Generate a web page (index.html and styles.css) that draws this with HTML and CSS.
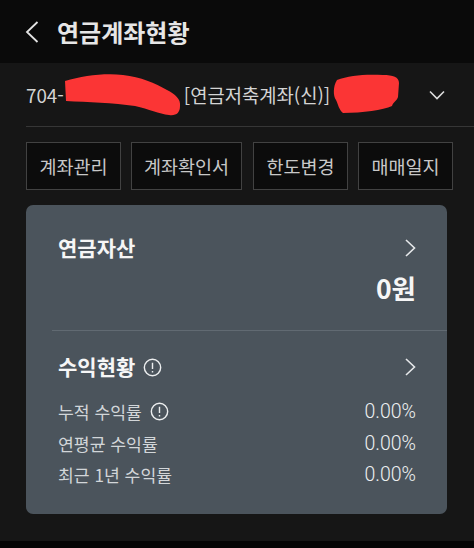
FILE: index.html
```html
<!DOCTYPE html>
<html lang="ko">
<head>
<meta charset="utf-8">
<title>연금계좌현황</title>
<link rel="stylesheet" href="styles.css">
</head>
<body>
<div class="screen">
  <header class="topbar">
    <svg class="back" viewBox="0 0 14 24" width="14" height="24"><path d="M12.5 2 L2 12 L12.5 22" /></svg>
    <h1>연금계좌현황</h1>
  </header>
  <main class="content">
    <div class="account">
      <span class="acct-text">704-<span class="masked"></span>[연금저축계좌(신)]</span>
      <svg class="chev-down" viewBox="0 0 16 10" width="16" height="10"><path d="M1 1.5 L8 8.5 L15 1.5" /></svg>
      <svg class="scribble s1" viewBox="0 0 118 44" width="118" height="44"><path d="M2 8 C20 3 40 0 60 2 C78 4 92 10 104 17 C112 21 118 26 117 33 C117 40 113 43 106 42 C96 41 86 36 72 33 C50 30 25 29 3 28 Z" /></svg>
      <svg class="scribble s2" viewBox="0 0 66 40" width="66" height="40"><path d="M4 6 C16 1 34 0 50 1 C60 1 66 3 66 9 L65 23 C64 27 60 28 59 32 C50 36 30 39 10 39 C6 36 5 30 3 26 C0 22 0 12 4 6 Z" /></svg>
    </div>
    <nav class="actions">
      <button class="btn b1">계좌관리</button>
      <button class="btn b2">계좌확인서</button>
      <button class="btn b3">한도변경</button>
      <button class="btn b4">매매일지</button>
    </nav>
    <section class="card">
      <div class="asset">
        <div class="title-row">
          <h2>연금자산</h2>
          <svg class="chev" viewBox="0 0 11 18" width="11" height="18"><path d="M1 1 L9.5 9 L1 17" /></svg>
        </div>
        <div class="amount">0원</div>
      </div>
      <div class="returns">
        <div class="title-row">
          <div class="label-wrap">
            <h2>수익현황</h2>
            <svg class="info" viewBox="0 0 20 20" width="19" height="19"><circle cx="10" cy="10" r="8.6" /><path d="M10 5 V11.5 M10 13.8 V15.2" /></svg>
          </div>
          <svg class="chev" viewBox="0 0 11 18" width="11" height="18"><path d="M1 1 L9.5 9 L1 17" /></svg>
        </div>
        <dl class="rates">
          <div class="rate"><dt>누적 수익률<svg class="info" viewBox="0 0 20 20" width="19" height="19"><circle cx="10" cy="10" r="8.6" /><path d="M10 5 V11.5 M10 13.8 V15.2" /></svg></dt><dd>0.00%</dd></div>
          <div class="rate"><dt>연평균 수익률</dt><dd>0.00%</dd></div>
          <div class="rate"><dt>최근 1년 수익률</dt><dd>0.00%</dd></div>
        </dl>
      </div>
    </section>
  </main>
  <div class="bottom-strip"></div>
</div>
</body>
</html>
```
FILE: styles.css
```css
* { box-sizing: border-box; margin: 0; padding: 0; }
html, body { height: 100%; }
body {
  background: #161616;
  font-family: "Noto Sans CJK KR", "Noto Sans", sans-serif;
  overflow: hidden;
}
.screen { width: 474px; height: 548px; display: flex; flex-direction: column; }
.topbar {
  height: 63px;
  background: #0a0a0a;
  display: flex;
  align-items: center;
  padding-left: 25px;
  gap: 18px;
  flex: none;
}
.topbar h1 { font-size: 24px; font-weight: 700; color: #e6e6e6; line-height: 1; }
.back { fill: none; stroke: #e4e4e4; stroke-width: 1.8; }
.content { flex: 1; padding-left: 26px; background: #161616; }
.account {
  position: relative;
  height: 64px;
  border-bottom: 1px solid #363636;
  display: flex;
  align-items: center;
  justify-content: space-between;
  padding-right: 29px;
}
.acct-text { font-size: 18.8px; color: #d4d4d4; display: flex; align-items: center; }
.masked { display: inline-block; width: 120px; height: 1px; }
.chev-down { fill: none; stroke: #dcdcdc; stroke-width: 1.6; }
.scribble { position: absolute; fill: #fb3535; }
.s1 { left: 37px; top: 10px; }
.s2 { left: 307px; top: 11px; }
.actions { display: flex; margin-top: 15px; height: 48px; }
.btn {
  background: #0c0c0c;
  border: 1.5px solid #424242;
  color: #c8c8c8;
  font-family: inherit;
  font-size: 18.5px;
  height: 48px;
  flex: none;
}
.b1 { width: 95px; }
.b2 { width: 111px; margin-left: 10px; }
.b3 { width: 95px; margin-left: 11px; }
.b4 { width: 95px; margin-left: 10px; }
.card {
  width: 421px;
  height: 309px;
  margin-top: 15px;
  background: #4b545c;
  border-radius: 7px;
  display: flex;
  flex-direction: column;
}
.asset {
  margin-left: 26px;
  height: 126px;
  border-bottom: 1px solid #616a72;
  padding: 27px 31px 0 6px;
}
.returns { padding: 20px 31px 0 32px; }
.title-row { display: flex; align-items: center; justify-content: space-between; height: 32px; }
.title-row h2 { font-size: 21px; font-weight: 700; color: #f6f6f6; line-height: 1; margin-top: -2px; }
.label-wrap { display: flex; align-items: center; gap: 8px; }
.chev { fill: none; stroke: #e6e8ea; stroke-width: 1.6; }
.info { fill: none; stroke: #eceeef; stroke-width: 1.5; flex: none; }
.amount { text-align: right; font-size: 26.5px; font-weight: 700; color: #f6f6f6; line-height: 36px; margin-top: 6px; }
.rates { margin-top: 13px; }
.rate { display: flex; justify-content: space-between; align-items: center; height: 31.5px; }
.rate dt { font-size: 17.2px; color: #d2d6d9; display: flex; align-items: center; gap: 8px; }
.rate dd { font-size: 19.5px; color: #eef0f1; font-family: Roboto, sans-serif; font-weight: 300; }
.bottom-strip { height: 7px; background: #050505; flex: none; }
```
